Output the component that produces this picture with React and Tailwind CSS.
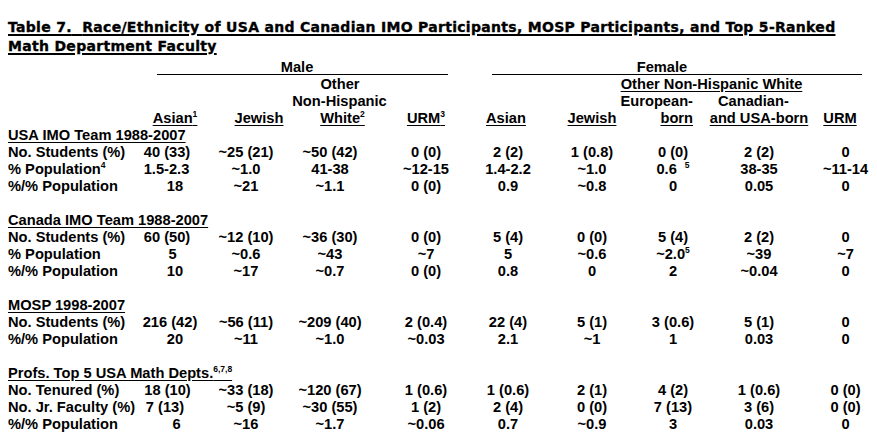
import React from "react";

const GRID =
  "grid grid-cols-[140px_70px_72px_96px_96px_68px_100px_62px_110px_63px] auto-rows-[17px] leading-[17px]";

const Sup = ({ children, className = "" }) => (
  <sup className={"text-[8.5px] -top-[6px] " + className}>{children}</sup>
);

const Cell = ({ children, className = "" }) => (
  <div className={"flex justify-center whitespace-nowrap " + className}>
    <span>{children}</span>
  </div>
);

const Label = ({ children }) => (
  <div className="pl-[8px] whitespace-nowrap">{children}</div>
);

const Section = ({ children }) => (
  <div className="col-span-10 pl-[8px] whitespace-nowrap">
    <span className="underline underline-offset-2">{children}</span>
  </div>
);

const Blank = () => <div className="col-span-10" />;

const DataRow = ({ label, cells }) => (
  <>
    <Label>{label}</Label>
    {cells.map((c, i) =>
      Array.isArray(c) ? (
        <Cell key={i} className={c[1]}>
          {c[0]}
        </Cell>
      ) : (
        <Cell key={i}>{c}</Cell>
      )
    )}
  </>
);

export default function App() {
  return (
    <div className="w-[877px] h-[448px] overflow-hidden bg-white text-black font-['Liberation_Sans',Arial,sans-serif] font-bold text-[14.67px]">
      <div className="pt-[17.5px] pl-[8px] font-['DejaVu_Sans',sans-serif] font-bold text-[14px] tracking-[0.3px] leading-[19px] whitespace-nowrap [-webkit-text-stroke:0.35px_black]">
        <span className="underline underline-offset-2 decoration-[1.5px]">
          Table 7.{"\u00a0 "}Race/Ethnicity of USA and Canadian IMO Participants, MOSP Participants, and Top 5-Ranked
        </span>
        <br />
        <span className="underline underline-offset-2 decoration-[1.5px]">Math Department Faculty</span>
      </div>

      <div className={GRID + " mt-[3.5px]"}>
        {/* Row: Male / Female */}
        <div />
        <div className="col-span-4 ml-[17px] mr-[26px] h-[16px] leading-[16px] border-b border-black flex justify-center">
          <span className="pr-[11px]">Male</span>
        </div>
        <div className="col-span-5 ml-[18px] mr-[15px] h-[16px] leading-[16px] border-b border-black flex justify-center">
          <span className="pr-[30px]">Female</span>
        </div>

        {/* Row: Other */}
        <div />
        <div />
        <div />
        <Cell className="pl-[20px]">Other</Cell>
        <div />
        <div />
        <div />
        <Cell className="col-span-2 pr-[33px]">
          <span className="underline underline-offset-2">Other Non-Hispanic White</span>
        </Cell>
        <div />

        {/* Row: Non-Hispanic */}
        <div />
        <div />
        <div />
        <Cell className="pl-[19px]">Non-Hispanic</Cell>
        <div />
        <div />
        <div />
        <div className="flex justify-end whitespace-nowrap pr-[11px]">European-</div>
        <div className="flex justify-start whitespace-nowrap pl-[14px]">Canadian-</div>
        <div />

        {/* Row: column headers */}
        <div />
        <Cell>
          <span className="underline underline-offset-2">
            Asian<Sup>1</Sup>
          </span>
        </Cell>
        <Cell className="pl-[26px]">
          <span className="underline underline-offset-2">Jewish</span>
        </Cell>
        <Cell className="pl-[25px]">
          <span className="underline underline-offset-2">
            White<Sup>2</Sup>
          </span>
        </Cell>
        <Cell>
          <span className="underline underline-offset-2">
            URM<Sup>3</Sup>
          </span>
        </Cell>
        <Cell className="pr-[4px]">
          <span className="underline underline-offset-2">Asian</span>
        </Cell>
        <Cell>
          <span className="underline underline-offset-2">Jewish</span>
        </Cell>
        <div className="flex justify-end whitespace-nowrap pr-[11px]">
          <span className="underline underline-offset-2">born</span>
        </div>
        <Cell>
          <span className="underline underline-offset-2">and USA-born</span>
        </Cell>
        <Cell className="pr-[11px]">
          <span className="underline underline-offset-2">URM</span>
        </Cell>

        {/* USA IMO */}
        <Section>USA IMO Team 1988-2007</Section>
        <DataRow
          label="No. Students (%)"
          cells={[
            ["40 (33)", "pr-[16px]"],
            "~25 (21)",
            "~50 (42)",
            "0 (0)",
            "2 (2)",
            "1 (0.8)",
            "0 (0)",
            "2 (2)",
            "0",
          ]}
        />
        <DataRow
          label={
            <>
              % Population<Sup>4</Sup>
            </>
          }
          cells={[
            ["1.5-2.3", "pr-[17px]"],
            "~1.0",
            "41-38",
            "~12-15",
            "1.4-2.2",
            "~1.0",
            <>
              0.6<Sup className="ml-[8px]">5</Sup>
            </>,
            "38-35",
            "~11-14",
          ]}
        />
        <DataRow
          label="%/% Population"
          cells={["18", "~21", "~1.1", "0 (0)", "0.9", "~0.8", "0", "0.05", "0"]}
        />
        <Blank />

        {/* Canada IMO */}
        <Section>Canada IMO Team 1988-2007</Section>
        <DataRow
          label="No. Students (%)"
          cells={[
            ["60 (50)", "pr-[16px]"],
            "~12 (10)",
            "~36 (30)",
            "0 (0)",
            "5 (4)",
            "0 (0)",
            "5 (4)",
            "2 (2)",
            "0",
          ]}
        />
        <DataRow
          label="% Population"
          cells={[
            ["5", "pr-[5px]"],
            "~0.6",
            "~43",
            "~7",
            "5",
            "~0.6",
            <>
              ~2.0<Sup>5</Sup>
            </>,
            "~39",
            "~7",
          ]}
        />
        <DataRow
          label="%/% Population"
          cells={["10", "~17", "~0.7", "0 (0)", "0.8", "0", "2", "~0.04", "0"]}
        />
        <Blank />

        {/* MOSP */}
        <Section>MOSP 1998-2007</Section>
        <DataRow
          label="No. Students (%)"
          cells={[
            ["216 (42)", "pr-[10px]"],
            "~56 (11)",
            "~209 (40)",
            "2 (0.4)",
            "22 (4)",
            "5 (1)",
            "3 (0.6)",
            "5 (1)",
            "0",
          ]}
        />
        <DataRow
          label="%/% Population"
          cells={["20", "~11", "~1.0", "~0.03", "2.1", "~1", "1", "0.03", "0"]}
        />
        <Blank />

        {/* Profs */}
        <Section>
          Profs. Top 5 USA Math Depts.<Sup>6,7,8</Sup>
        </Section>
        <DataRow
          label="No. Tenured (%)"
          cells={[
            ["18 (10)", "pr-[15px]"],
            "~33 (18)",
            "~120 (67)",
            "1 (0.6)",
            "1 (0.6)",
            "2 (1)",
            "4 (2)",
            "1 (0.6)",
            "0 (0)",
          ]}
        />
        <DataRow
          label="No. Jr. Faculty (%)"
          cells={[
            ["7 (13)", "pr-[20px]"],
            "~5 (9)",
            "~30 (55)",
            "1 (2)",
            "2 (4)",
            "0 (0)",
            "7 (13)",
            "3 (6)",
            "0 (0)",
          ]}
        />
        <DataRow
          label="%/% Population"
          cells={[["6", "pl-[3px]"], "~16", "~1.7", "~0.06", "0.7", "~0.9", "3", "0.03", "0"]}
        />
      </div>
    </div>
  );
}
